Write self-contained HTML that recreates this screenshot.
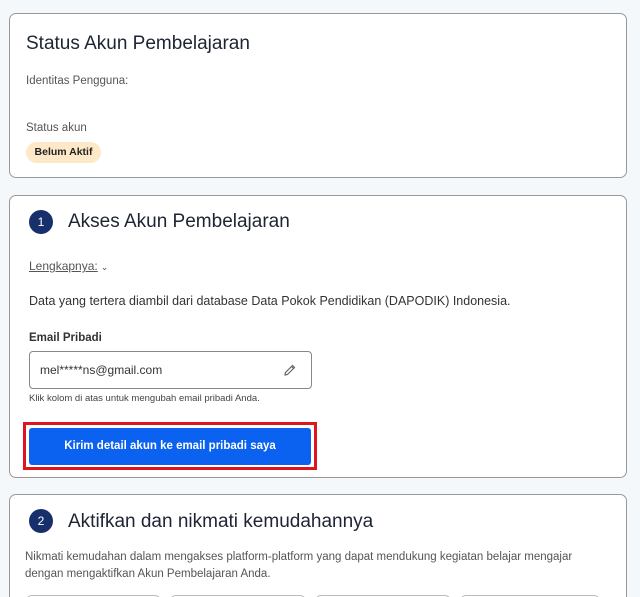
<!DOCTYPE html>
<html><head><meta charset="utf-8"><style>
*{box-sizing:border-box;margin:0;padding:0}
html,body{width:640px;height:597px;overflow:hidden}
body{background:#f4f8fb;font-family:"Liberation Sans",sans-serif;color:#333;position:relative}
.card{position:absolute;left:9px;width:618px;background:#fff;border:1px solid #999;border-radius:7px}
.abs{position:absolute;white-space:nowrap}
.num{position:absolute;width:24px;height:24px;border-radius:50%;background:#17306b;color:#fff;font-size:12px;text-align:center;line-height:24px}
</style></head><body>
<div class="card" style="top:13px;height:165px">
 <div class="abs" style="left:16px;top:19px;font-size:19px;color:#1d2433">Status Akun Pembelajaran</div>
 <div class="abs" style="left:16px;top:61px;font-size:11.5px;color:#555">Identitas Pengguna:</div>
 <div class="abs" style="left:16px;top:108px;font-size:11.5px;color:#555">Status akun</div>
 <div class="abs" style="left:16px;top:128px;height:21px;width:75px;background:#fde9c8;border-radius:11px;font-size:10.5px;font-weight:bold;color:#222;text-align:center;line-height:21px">Belum Aktif</div>
</div>
<div class="card" style="top:195px;height:283px">
 <div class="num" style="left:19px;top:14px">1</div>
 <div class="abs" style="left:58px;top:15px;font-size:19px;color:#1d2433">Akses Akun Pembelajaran</div>
 <div class="abs" style="left:19px;top:63px;font-size:12px;color:#555;text-decoration:underline">Lengkapnya:<span style="text-decoration:none;display:inline-block;margin-left:3px;font-size:9px">&#8964;</span></div>
 <div class="abs" style="left:19px;top:98px;font-size:12.5px;color:#333">Data yang tertera diambil dari database Data Pokok Pendidikan (DAPODIK) Indonesia.</div>
 <div class="abs" style="left:19px;top:136px;font-size:11.5px;font-weight:bold;color:#333">Email Pribadi</div>
 <div class="abs" style="left:19px;top:155px;width:283px;height:38px;border:1px solid #888;border-radius:4px">
  <div class="abs" style="left:10px;top:11px;font-size:12px;color:#333">mel*****ns@gmail.com</div>
  <svg class="abs" style="left:253px;top:11px" width="14" height="14" viewBox="0 0 14 14"><path d="M2 12 L2.5 9.5 L9.5 2.5 L11.5 4.5 L4.5 11.5 Z M8.5 3.5 L10.5 5.5" fill="none" stroke="#666" stroke-width="1.2"/></svg>
 </div>
 <div class="abs" style="left:19px;top:197px;font-size:9.5px;color:#444">Klik kolom di atas untuk mengubah email pribadi Anda.</div>
 <div class="abs" style="left:13px;top:226px;width:294px;height:48px;border:3px solid #e0141e"></div>
 <div class="abs" style="left:19px;top:232px;width:282px;height:37px;background:#0b62f0;border-radius:3px;color:#fff;font-size:11.5px;font-weight:bold;text-align:center;line-height:37px">Kirim detail akun ke email pribadi saya</div>
</div>
<div class="card" style="top:494px;height:103px;border-bottom:none;border-radius:7px 7px 0 0;overflow:hidden">
 <div class="num" style="left:19px;top:14px">2</div>
 <div class="abs" style="left:58px;top:16px;font-size:19px;color:#1d2433">Aktifkan dan nikmati kemudahannya</div>
 <div class="abs" style="left:15px;top:56px;font-size:11.5px;color:#555">Nikmati kemudahan dalam mengakses platform-platform yang dapat mendukung kegiatan belajar mengajar</div>
 <div class="abs" style="left:15px;top:73px;font-size:11.5px;color:#555">dengan mengaktifkan Akun Pembelajaran Anda.</div>
 <div class="abs" style="left:16px;top:100px;width:135px;height:30px;border:1px solid #bbb;border-radius:6px"></div>
 <div class="abs" style="left:160px;top:100px;width:136px;height:30px;border:1px solid #bbb;border-radius:6px"></div>
 <div class="abs" style="left:305px;top:100px;width:136px;height:30px;border:1px solid #bbb;border-radius:6px"></div>
 <div class="abs" style="left:450px;top:100px;width:140px;height:30px;border:1px solid #bbb;border-radius:6px"></div>
</div>
</body></html>
